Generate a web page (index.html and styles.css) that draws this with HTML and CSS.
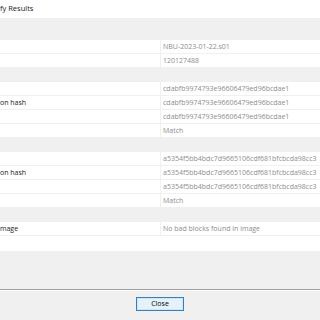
FILE: index.html
```html
<!DOCTYPE html>
<html>
<head>
<meta charset="utf-8">
<link rel="stylesheet" href="styles.css">
</head>
<body>
<div class="dialog">
  <div class="title">fy Results</div>
  <div class="table">
    <div class="group group-top"></div>
    <div class="row"><div class="label"></div><div class="value">NBU-2023-01-22.s01</div></div>
    <div class="row"><div class="label"></div><div class="value">120127488</div></div>
    <div class="group"></div>
    <div class="row"><div class="label"></div><div class="value">cdabfb9974793e96606479ed96bcdae1</div></div>
    <div class="row"><div class="label">on hash</div><div class="value">cdabfb9974793e96606479ed96bcdae1</div></div>
    <div class="row"><div class="label"></div><div class="value">cdabfb9974793e96606479ed96bcdae1</div></div>
    <div class="row"><div class="label"></div><div class="value">Match</div></div>
    <div class="group"></div>
    <div class="row"><div class="label"></div><div class="value">a5354f5bb4bdc7d9665106cdf681bfcbcda98cc3</div></div>
    <div class="row"><div class="label">on hash</div><div class="value">a5354f5bb4bdc7d9665106cdf681bfcbcda98cc3</div></div>
    <div class="row"><div class="label"></div><div class="value">a5354f5bb4bdc7d9665106cdf681bfcbcda98cc3</div></div>
    <div class="row"><div class="label"></div><div class="value">Match</div></div>
    <div class="group"></div>
    <div class="row"><div class="label">mage</div><div class="value">No bad blocks found in image</div></div>
    <div class="spacer"></div>
  </div>
  <div class="footer">
    <div class="footer-top"></div>
    <div class="footer-bottom">
      <button class="btn">Close</button>
    </div>
  </div>
</div>
</body>
</html>
```
FILE: styles.css
```css
html, body {
  margin: 0;
  padding: 0;
  width: 320px;
  height: 320px;
  overflow: hidden;
  background: #f0f0f0;
}
.dialog {
  width: 320px;
  height: 320px;
  display: flex;
  flex-direction: column;
  font-family: "Open Sans", "Noto Sans", sans-serif;
  font-size: 7px;
  color: #1a1a1a;
}
.title {
  height: 18px;
  line-height: 16px;
  background: #ffffff;
  font-size: 7.5px;
  white-space: nowrap;
}
.table {
  background: #ffffff;
  display: flex;
  flex-direction: column;
}
.group {
  height: 14px;
  background: #f0f0f0;
}
.group-top {
  height: 22px;
}
.row {
  height: 14px;
  display: grid;
  grid-template-columns: 161px 1fr;
  box-sizing: border-box;
  border-bottom: 1px solid #f0f0f0;
}
.label {
  border-right: 1px solid #f0f0f0;
  line-height: 13px;
  white-space: nowrap;
  overflow: hidden;
}
.value {
  padding-left: 2px;
  line-height: 13px;
  color: #8e8e8e;
  white-space: nowrap;
  overflow: hidden;
}
.spacer {
  height: 15px;
}
.footer {
  flex: 1;
  display: flex;
  flex-direction: column;
  background: #f0f0f0;
}
.footer-top {
  height: 39px;
  box-sizing: border-box;
  border-bottom: 1px solid #a0a0a0;
}
.footer-bottom {
  border-top: 1px solid #ffffff;
  display: flex;
  justify-content: center;
  padding-top: 6px;
  padding-left: 0;
}
.btn {
  width: 48px;
  height: 14px;
  margin: 0;
  padding: 0;
  box-sizing: border-box;
  border: 1px solid #3c7fb1;
  background: #e5f1fb;
  font-family: "Open Sans", "Noto Sans", sans-serif;
  font-size: 7px;
  color: #000;
  line-height: 12px;
  box-shadow: inset 0 0 0 1px #cde6f7;
}
```
